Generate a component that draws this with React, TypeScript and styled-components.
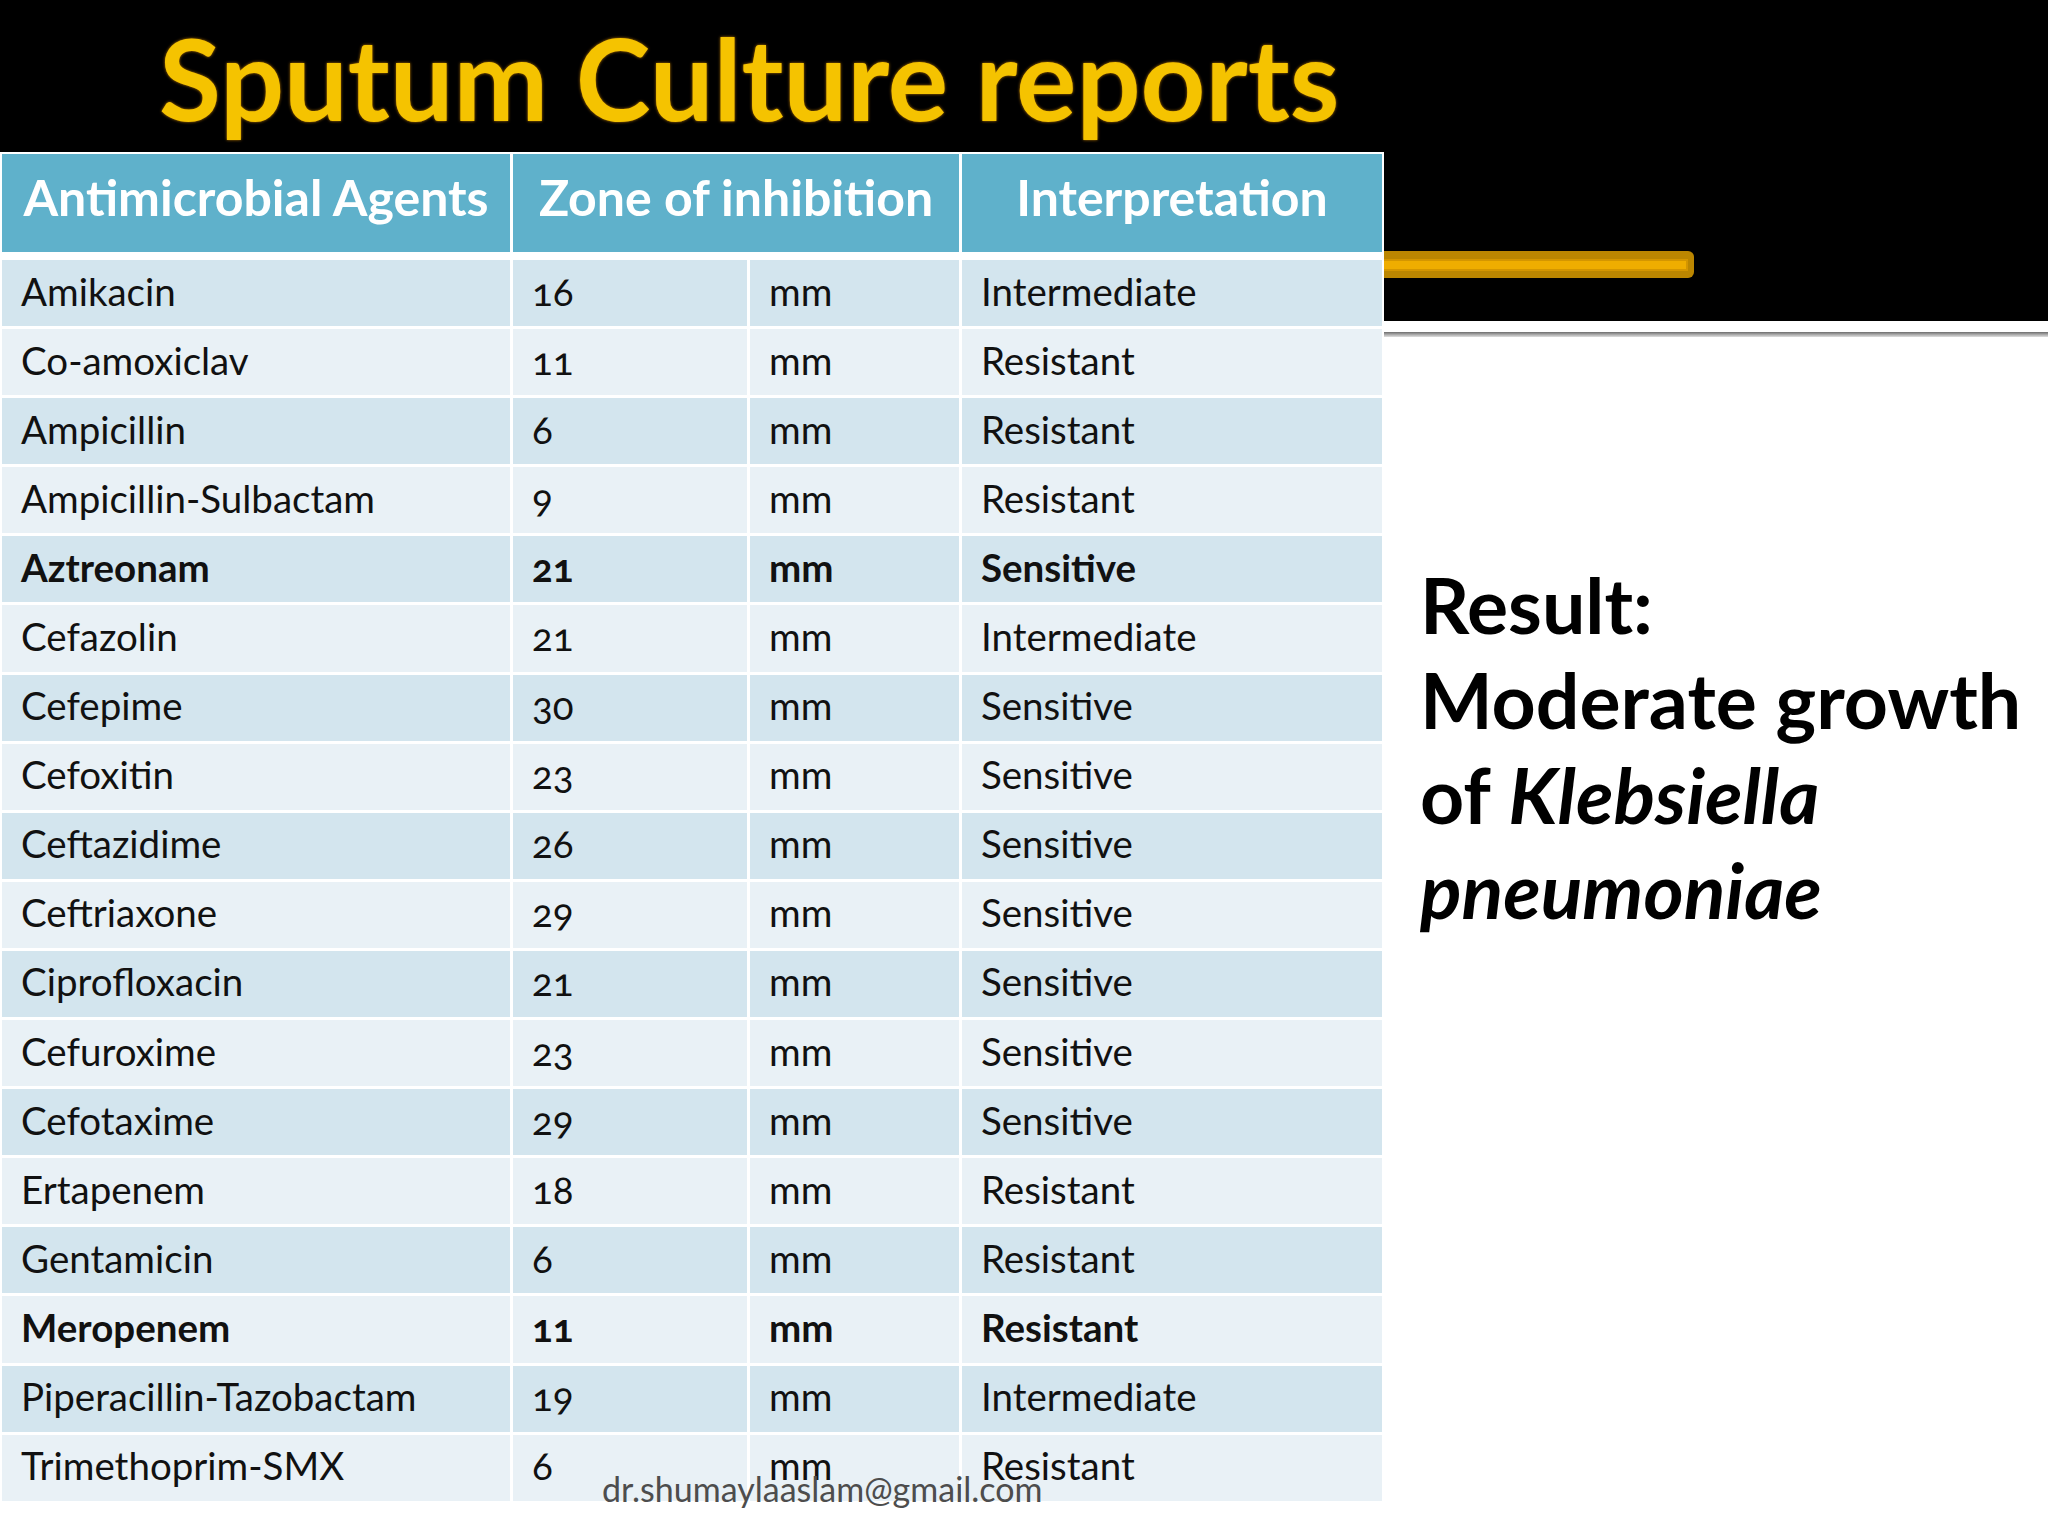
import React from "react";
import styled, { createGlobalStyle } from "styled-components";

const Global = createGlobalStyle`
  html, body { margin: 0; padding: 0; background: #ffffff; }
  body { font-family: Lato, "Open Sans", sans-serif; }
`;

const Slide = styled.div`
  position: relative;
  width: 2048px;
  height: 1536px;
  overflow: hidden;
  background: #ffffff;
  display: grid;
  grid-template-columns: 1384px 1fr;
  align-items: start;
`;

const LeftColumn = styled.div`
  display: flex;
  flex-direction: column;
`;

const TitleBar = styled.div`
  box-sizing: border-box;
  height: 152px;
  background: #000000;
  padding: 21px 0 0 159px;
`;

const Title = styled.h1`
  margin: 0;
  font-family: Lato, sans-serif;
  font-weight: 700;
  font-size: 113px;
  line-height: 1;
  color: #f5c300;
  white-space: nowrap;
  text-shadow: 0 0 3px rgba(214, 138, 0, 0.9), 2px 3px 4px rgba(0, 0, 0, 0.9);
`;

const Table = styled.div`
  display: grid;
  grid-template-columns: 508px 234px 209px 420px;
  grid-template-rows: 103px;
  grid-auto-rows: 66.1px;
  column-gap: 3px;
  row-gap: 3px;
  padding: 2px 2px 0 2px;
  background: #ffffff;
`;

const HeadCell = styled.div<{ $span?: number }>`
  grid-column: span ${(p) => p.$span ?? 1};
  align-self: start;
  height: 98px;
  background: #5fb1cb;
  color: #ffffff;
  font-family: Lato, sans-serif;
  font-weight: 700;
  font-size: 50px;
  display: flex;
  align-items: center;
  justify-content: center;
  padding-bottom: 12px;
  box-sizing: border-box;
  white-space: nowrap;
`;

const Cell = styled.div<{ $odd: boolean; $bold: boolean }>`
  background: ${(p) => (p.$odd ? "#d3e5ee" : "#e9f1f6")};
  color: #111111;
  font-family: Lato, sans-serif;
  font-weight: ${(p) => (p.$bold ? 700 : 400)};
  font-size: 38.5px;
  font-variant-numeric: oldstyle-nums;
  display: flex;
  align-items: center;
  padding: 0 0 5px 19px;
  box-sizing: border-box;
  white-space: nowrap;
`;

const RightColumn = styled.div`
  display: flex;
  flex-direction: column;
`;

const BlackPanel = styled.div`
  box-sizing: border-box;
  height: 321px;
  background: #000000;
  padding-top: 251px;
`;

const GoldBar = styled.div`
  box-sizing: border-box;
  width: 310px;
  height: 27px;
  background: #bb8600;
  border-radius: 0 6px 6px 0;
  padding: 8px 6px 7px 0;
`;

const GoldInner = styled.div`
  box-sizing: border-box;
  height: 100%;
  background: #efad00;
  border: 2px solid #d49600;
  border-left: none;
`;

const GrayRule = styled.div`
  margin-top: 11px;
  height: 5px;
  background: linear-gradient(to bottom, #6d6d6d, #a8a8a8 50%, #dedede);
`;

const Result = styled.div`
  padding: 220px 0 0 36px;
  font-family: Lato, sans-serif;
  font-weight: 700;
  font-size: 77px;
  line-height: 95px;
  color: #000000;
  white-space: nowrap;
`;

const Species = styled.em`
  font-style: italic;
`;

const Watermark = styled.div`
  position: absolute;
  left: 602px;
  top: 1472px;
  font-family: Lato, sans-serif;
  font-size: 34px;
  line-height: 1;
  color: #4d4d4d;
  white-space: nowrap;
`;

type Row = { name: string; zone: string; interp: string; bold?: boolean };

const rows: Row[] = [
  { name: "Amikacin", zone: "16", interp: "Intermediate" },
  { name: "Co-amoxiclav", zone: "11", interp: "Resistant" },
  { name: "Ampicillin", zone: "6", interp: "Resistant" },
  { name: "Ampicillin-Sulbactam", zone: "9", interp: "Resistant" },
  { name: "Aztreonam", zone: "21", interp: "Sensitive", bold: true },
  { name: "Cefazolin", zone: "21", interp: "Intermediate" },
  { name: "Cefepime", zone: "30", interp: "Sensitive" },
  { name: "Cefoxitin", zone: "23", interp: "Sensitive" },
  { name: "Ceftazidime", zone: "26", interp: "Sensitive" },
  { name: "Ceftriaxone", zone: "29", interp: "Sensitive" },
  { name: "Ciprofloxacin", zone: "21", interp: "Sensitive" },
  { name: "Cefuroxime", zone: "23", interp: "Sensitive" },
  { name: "Cefotaxime", zone: "29", interp: "Sensitive" },
  { name: "Ertapenem", zone: "18", interp: "Resistant" },
  { name: "Gentamicin", zone: "6", interp: "Resistant" },
  { name: "Meropenem", zone: "11", interp: "Resistant", bold: true },
  { name: "Piperacillin-Tazobactam", zone: "19", interp: "Intermediate" },
  { name: "Trimethoprim-SMX", zone: "6", interp: "Resistant" },
];

export default function App() {
  return (
    <>
      <Global />
      <Slide>
        <LeftColumn>
          <TitleBar>
            <Title>Sputum Culture reports</Title>
          </TitleBar>
          <Table>
            <HeadCell>Antimicrobial Agents</HeadCell>
            <HeadCell $span={2}>Zone of inhibition</HeadCell>
            <HeadCell>Interpretation</HeadCell>
            {rows.map((r, i) => {
              const odd = i % 2 === 0;
              const bold = !!r.bold;
              return (
                <React.Fragment key={r.name}>
                  <Cell $odd={odd} $bold={bold}>{r.name}</Cell>
                  <Cell $odd={odd} $bold={bold}>{r.zone}</Cell>
                  <Cell $odd={odd} $bold={bold}>mm</Cell>
                  <Cell $odd={odd} $bold={bold}>{r.interp}</Cell>
                </React.Fragment>
              );
            })}
          </Table>
        </LeftColumn>
        <RightColumn>
          <BlackPanel>
            <GoldBar>
              <GoldInner />
            </GoldBar>
          </BlackPanel>
          <GrayRule />
          <Result>
            Result:
            <br />
            Moderate growth
            <br />
            of <Species>Klebsiella</Species>
            <br />
            <Species>pneumoniae</Species>
          </Result>
        </RightColumn>
        <Watermark>dr.shumaylaaslam@gmail.com</Watermark>
      </Slide>
    </>
  );
}
